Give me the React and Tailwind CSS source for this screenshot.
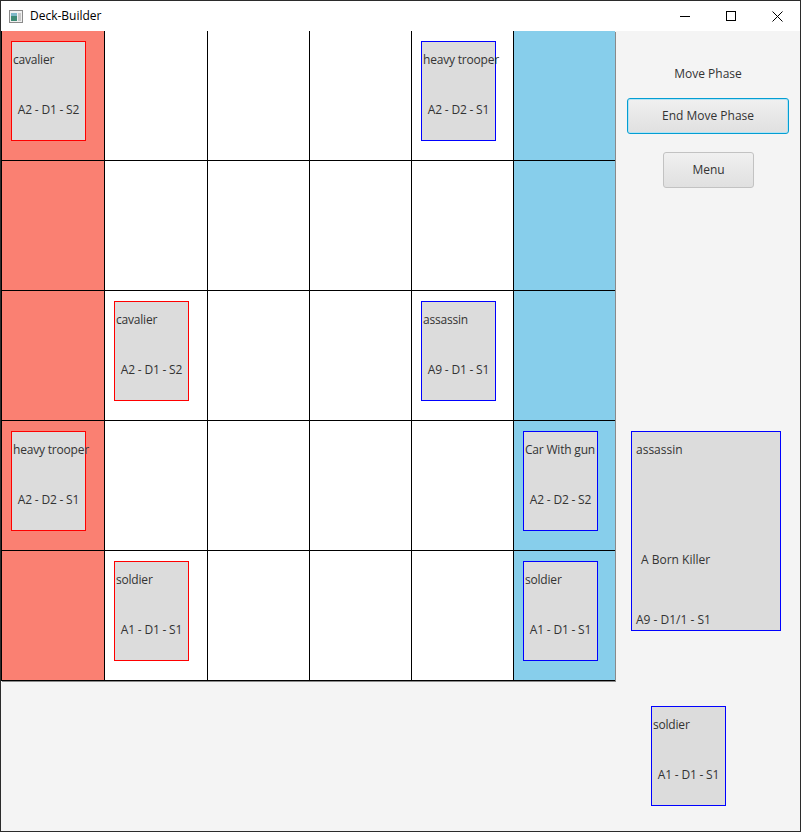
import React from "react";

const font = { fontFamily: '"Segoe UI", "Open Sans", "Noto Sans", sans-serif' };

function Card({ name, stats, color }) {
  return (
    <div
      className={`w-[75px] h-[100px] bg-[#dcdcdc] border flex flex-col text-[12px] text-[#333] leading-[16px] tracking-[-0.2px] ${
        color === "red" ? "border-[#ff0000]" : "border-[#0000ff]"
      }`}
    >
      <div className="mt-[10px] pl-[1px] whitespace-nowrap">{name}</div>
      <div className="mt-[34px] text-center whitespace-nowrap">{stats}</div>
    </div>
  );
}

const cells = [
  [{ name: "cavalier", stats: "A2 - D1 - S2", color: "red" }, null, null, null, { name: "heavy trooper", stats: "A2 - D2 - S1", color: "blue" }, null],
  [null, null, null, null, null, null],
  [null, { name: "cavalier", stats: "A2 - D1 - S2", color: "red" }, null, null, { name: "assassin", stats: "A9 - D1 - S1", color: "blue" }, null],
  [{ name: "heavy trooper", stats: "A2 - D2 - S1", color: "red" }, null, null, null, null, { name: "Car With gun", stats: "A2 - D2 - S2", color: "blue" }],
  [null, { name: "soldier", stats: "A1 - D1 - S1", color: "red" }, null, null, null, { name: "soldier", stats: "A1 - D1 - S1", color: "blue" }],
];

function colBg(c) {
  if (c === 0) return "bg-[#fa8072]";
  if (c === 5) return "bg-[#87ceeb]";
  return "bg-white";
}

export default function App() {
  return (
    <div
      className="w-[801px] h-[832px] border border-[#2b2b2b] bg-[#f4f4f4] flex flex-col overflow-hidden"
      style={font}
    >
      {/* Title bar */}
      <div className="h-[30px] bg-white flex items-center shrink-0">
        <svg width="14" height="13" viewBox="0 0 14 13" className="ml-[8px]">
          <rect x="0.5" y="0.5" width="13" height="12" fill="#f0f0f0" stroke="#8a8a8a" />
          <rect x="2" y="3" width="6" height="8" fill="#3d8a74" />
          <rect x="2" y="3" width="6" height="3" fill="#7fb8c8" />
          <rect x="9" y="3" width="3" height="8" fill="#c8c8c8" />
        </svg>
        <span className="ml-[7px] text-[12px] text-black">Deck-Builder</span>
        <div className="ml-auto flex items-center h-full">
          <div className="w-[46px] h-full flex items-center justify-center">
            <div className="w-[10px] h-px bg-black" />
          </div>
          <div className="w-[46px] h-full flex items-center justify-center">
            <div className="w-[10px] h-[10px] border border-black" />
          </div>
          <div className="w-[46px] h-full flex items-center justify-center">
            <svg width="11" height="11" viewBox="0 0 11 11">
              <path d="M0.5 0.5 L10.5 10.5 M10.5 0.5 L0.5 10.5" stroke="black" strokeWidth="1" />
            </svg>
          </div>
        </div>
      </div>

      {/* Body */}
      <div className="flex flex-1">
        <div className="flex flex-col">
          <div className="border-l border-b border-black shadow-[1px_1px_0_#8a8a8a]">
            <div className="grid grid-cols-[102px_102px_101px_101px_101px_101px] grid-rows-[129px_129px_129px_129px_129px] gap-px bg-black">
              {cells.map((row, r) =>
                row.map((card, c) => (
                  <div key={`${r}-${c}`} className={`${colBg(c)} pt-[10px] pl-[9px]`}>
                    {card && <Card {...card} />}
                  </div>
                ))
              )}
            </div>
          </div>
        </div>

        {/* Right panel */}
        <div className="flex-1 flex flex-col ml-px text-[12px] text-[#333] leading-[16px]">
          <div className="mt-[35px] text-center">Move Phase</div>
          <button className="mt-[16px] ml-[11px] w-[162px] h-[36px] rounded-[3px] border border-[#039ed3] shadow-[inset_0_0_0_1px_#b5e3f3] bg-gradient-to-b from-[#f0f0f0] to-[#e0e0e0] text-[12px] text-[#333]">
            End Move Phase
          </button>
          <button className="mt-[18px] ml-[47px] w-[91px] h-[36px] rounded-[3px] border border-[#c2c2c2] bg-gradient-to-b from-[#f0f0f0] to-[#e0e0e0] text-[12px] text-[#333]">
            Menu
          </button>
          <div className="mt-[243px] ml-[15px] w-[150px] h-[200px] bg-[#dcdcdc] border border-[#0000ff] flex flex-col">
            <div className="mt-[10px] pl-[4px]">assassin</div>
            <div className="mt-[94px] pl-[9px]">A Born Killer</div>
            <div className="mt-[44px] pl-[4px]">A9 - D1/1 - S1</div>
          </div>
          <div className="mt-[75px] ml-[35px]">
            <Card name="soldier" stats="A1 - D1 - S1" color="blue" />
          </div>
        </div>
      </div>
    </div>
  );
}
